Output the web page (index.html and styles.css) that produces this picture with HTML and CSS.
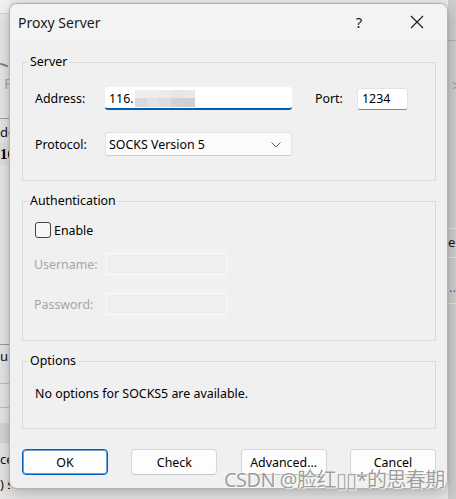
FILE: index.html
```html
<!DOCTYPE html>
<html>
<head>
<meta charset="utf-8">
<link rel="stylesheet" href="styles.css">
</head>
<body>
<div class="desktop">
  <div class="back-left">
    <div class="bl-top"></div>
    <div class="bl-arrow"></div>
    <div class="bl-f">F</div>
    <div class="bl-rule r1"></div>
    <div class="bl-text t1">do</div>
    <div class="bl-band">16</div>
    <div class="bl-rule r2"></div>
    <div class="bl-text t2">u c</div>
    <div class="bl-rule r3"></div>
    <div class="bl-rule r4"></div>
    <div class="bl-grey"></div>
    <div class="bl-text t3">ce</div>
    <div class="bl-text t4">) s</div>
  </div>
  <div class="back-right">
    <div class="br-chev">&gt;</div>
    <div class="br-rule q1"></div>
    <div class="br-rule q2"></div>
    <div class="br-text e">e</div>
    <div class="br-rule q3"></div>
    <div class="br-dots">..</div>
    <div class="br-rule q4"></div>
  </div>

  <div class="dialog">
    <div class="titlebar">
      <span class="title">Proxy Server</span>
      <span class="help">?</span>
      <span class="close">
        <svg width="14" height="14" viewBox="0 0 14 14"><path d="M1 1 L13 13 M13 1 L1 13" stroke="#1a1a1a" stroke-width="1.1" fill="none"/></svg>
      </span>
    </div>
    <div class="body">
      <fieldset class="group server">
        <legend>Server</legend>
        <div class="row row-addr">
          <span class="lbl">Address:</span>
          <div class="edit addr">116.<span class="mosaic"><i class="m1"></i><i class="m2"></i><i class="m3"></i><i class="m4"></i><i class="m5"></i></span></div>
          <span class="lbl port-lbl">Port:</span>
          <div class="edit port">1234</div>
        </div>
        <div class="row row-proto">
          <span class="lbl">Protocol:</span>
          <div class="combo">SOCKS Version 5
            <svg class="chev" width="10" height="6" viewBox="0 0 10 6"><path d="M0.5 0.5 L5 5 L9.5 0.5" stroke="#5f5f5f" stroke-width="1" fill="none"/></svg>
          </div>
        </div>
      </fieldset>

      <fieldset class="group auth">
        <legend>Authentication</legend>
        <div class="check-row"><span class="checkbox"></span><span>Enable</span></div>
        <div class="row dis-row first">
          <span class="lbl dis">Username:</span>
          <div class="dis-edit"></div>
        </div>
        <div class="row dis-row">
          <span class="lbl dis">Password:</span>
          <div class="dis-edit"></div>
        </div>
      </fieldset>

      <fieldset class="group options">
        <legend>Options</legend>
        <div class="opt-text">No options for SOCKS5 are available.</div>
      </fieldset>

      <div class="buttons">
        <button class="btn default">OK</button>
        <button class="btn">Check</button>
        <button class="btn">Advanced...</button>
        <button class="btn">Cancel</button>
      </div>
    </div>
  </div>

  <div class="watermark">CSDN @脸红▯▯*的思春期</div>
</div>
</body>
</html>
```

FILE: styles.css
```css
html, body {
  margin: 0;
  padding: 0;
}
body {
  width: 456px;
  height: 499px;
  overflow: hidden;
  font-family: "Noto Sans", "Open Sans", "Liberation Sans", sans-serif;
  font-size: 12.4px;
  color: #000;
}
.desktop {
  position: relative;
  width: 456px;
  height: 499px;
  background: #e9e9e9;
  overflow: hidden;
}

/* backdrop window fragments */
.back-left {
  position: absolute;
  left: 0;
  top: 0;
  width: 10px;
  height: 499px;
  background: #e6e6e6;
  overflow: hidden;
}
.bl-top { position: absolute; left: 0; top: 0; width: 10px; height: 13px; background: #f0f0f0; border-bottom: 1px solid #d4d4d4; }
.bl-arrow { position: absolute; left: 0; top: 64px; width: 8px; height: 2px; background: #7a7a7a; transform: rotate(20deg); }
.bl-f { position: absolute; left: 4px; top: 73px; color: #a8a8a8; font-size: 15px; }
.bl-rule { position: absolute; left: 0; width: 10px; height: 1px; background: #a0a0a0; }
.r1 { top: 118px; }
.r2 { top: 344px; background: #9a9a9a; }
.r3 { top: 383px; background: #bdbdbd; }
.r4 { top: 407px; background: #bdbdbd; }
.bl-text { position: absolute; left: 0; font-size: 13px; color: #111; white-space: nowrap; }
.t1 { top: 123px; }
.t2 { top: 347px; }
.t3 { top: 450px; }
.t4 { top: 475px; }
.bl-band { position: absolute; left: 0; top: 143px; width: 10px; height: 22px; background: #e0e0e0; font-weight: bold; font-family: "Liberation Serif", serif; font-size: 15px; line-height: 22px; white-space: nowrap; }
.bl-grey { position: absolute; left: 0; top: 423px; width: 10px; height: 20px; background: #d6d6d6; }

.back-right {
  position: absolute;
  left: 448px;
  top: 0;
  width: 8px;
  height: 499px;
  background: #cdcdcd;
  overflow: hidden;
}
.br-chev { position: absolute; left: 4px; top: 76px; color: #9a9a9a; font-size: 14px; }
.br-rule { position: absolute; left: 0; width: 8px; height: 1px; background: #b0b0b0; }
.q1 { top: 40px; }
.q2 { top: 228px; background: #e4e4e4; }
.q3 { top: 257px; background: #e4e4e4; }
.q4 { top: 303px; background: #e4e4e4; }
.br-text { position: absolute; left: 0; top: 233px; font-size: 13px; color: #111; }
.br-dots { position: absolute; left: 1px; top: 278px; font-size: 13px; color: #3b6aa8; white-space: nowrap; }

/* dialog */
.dialog {
  position: absolute;
  left: 9px;
  top: 3px;
  width: 439px;
  height: 486px;
  box-sizing: border-box;
  border: 1px solid #b4b4b4;
  border-radius: 8px;
  background: #f0f0f0;
  box-shadow: 0 6px 16px rgba(0, 0, 0, 0.22), 0 0 3px rgba(0, 0, 0, 0.12);
  overflow: hidden;
  display: flex;
  flex-direction: column;
}
.titlebar {
  height: 36px;
  flex: none;
  background: #f3f3f3;
  display: flex;
  align-items: center;
  padding-left: 8px;
}
.title {
  font-size: 14px;
  flex: 1;
  color: #1a1a1a;
}
.help {
  font-size: 15px;
  width: 14px;
  color: #1a1a1a;
  margin-right: 44px;
  text-align: center;
}
.close {
  display: flex;
  width: 14px;
  height: 14px;
  margin-right: 23px;
}

.body {
  flex: 1;
  padding: 14px 11px 0 12px;
  display: flex;
  flex-direction: column;
}
.group {
  margin: 0;
  border: 1px solid #d9d9d9;
  padding: 0 12px;
  min-width: 0;
}
.group legend {
  margin-left: -7px;
  padding: 0 2px;
  line-height: 16px;
}
.row {
  display: flex;
  align-items: center;
}
.lbl {
  width: 70px;
  flex: none;
}
.server {
  padding-top: 17px;
  padding-bottom: 24px;
}
.row-addr { height: 23px; }
.row-proto { height: 24px; margin-top: 22px; }
.edit {
  box-sizing: border-box;
  height: 23px;
  background: #fff;
  display: flex;
  align-items: center;
  padding-left: 4px;
  border-radius: 3px;
}
.addr {
  width: 187px;
  border-bottom: 2px solid #005fb8;
  padding-top: 1px;
}
.mosaic {
  display: flex;
  height: 17px;
  margin-left: 1px;
}
.mosaic i { display: block; height: 100%; }
.m1 { width: 12px; background: linear-gradient(#eeeeee 50%, #dadada 50%); }
.m2 { width: 12px; background: linear-gradient(#ededed 50%, #e2e2e2 50%); }
.m3 { width: 12px; background: linear-gradient(#ebebeb 50%, #dddddd 50%); }
.m4 { width: 12px; background: linear-gradient(#e6e6e6 50%, #d2d2d2 50%); }
.m5 { width: 12px; background: linear-gradient(#e9e9e9 50%, #cfcfcf 50%); }
.port-lbl {
  width: 42px;
  margin-left: 23px;
}
.port {
  width: 51px;
  height: 22px;
  border: 1px solid #e4e4e4;
  border-bottom-color: #8a8a8a;
}
.combo {
  position: relative;
  box-sizing: border-box;
  width: 187px;
  height: 24px;
  background: #fbfbfb;
  border: 1px solid #e2e2e2;
  border-bottom-color: #cdcdcd;
  border-radius: 3px;
  display: flex;
  align-items: center;
  padding-left: 3px;
}
.chev {
  position: absolute;
  right: 10px;
  top: 9px;
}

.auth {
  margin-top: 12px;
  padding-top: 13px;
  padding-bottom: 25px;
}
.check-row {
  display: flex;
  align-items: center;
  height: 16px;
  gap: 3px;
}
.checkbox {
  box-sizing: border-box;
  width: 16px;
  height: 16px;
  border: 1px solid #444;
  border-radius: 3px;
  background: #f6f6f6;
}
.dis-row { height: 22px; margin-top: 18px; }
.dis-row.first { margin-top: 15px; }
.lbl.dis {
  width: 72px;
  margin-left: -1px;
  color: #a6a6a6;
}
.dis-edit {
  box-sizing: border-box;
  width: 121px;
  height: 22px;
  border: 1px solid #fafafa;
  background: #efefef;
}

.options {
  margin-top: 12px;
  padding-top: 17px;
  padding-bottom: 26px;
}
.opt-text {
  line-height: 16px;
}

.buttons {
  margin-top: 20px;
  display: flex;
  justify-content: space-between;
}
.btn {
  box-sizing: border-box;
  width: 86px;
  height: 26px;
  font-family: inherit;
  font-size: 12.4px;
  color: #000;
  background: #fdfdfd;
  border: 1px solid #d6d6d6;
  border-bottom-color: #c4c4c4;
  border-radius: 4px;
  padding: 0;
}
.btn.default {
  border: 1px solid #005fb8;
  box-shadow: inset 0 0 0 1px #6aa2d8;
  background: #fdfdfd;
}

.watermark {
  position: absolute;
  left: 224px;
  top: 467px;
  font-size: 20px;
  line-height: 26px;
  color: rgba(140, 140, 140, 0.85);
  font-family: "Noto Sans", "Noto Sans CJK SC", sans-serif;
  text-shadow: 0 0 1px #fff, 1px 1px 0 rgba(255,255,255,0.7);
  white-space: nowrap;
  letter-spacing: -0.6px;
}
```
